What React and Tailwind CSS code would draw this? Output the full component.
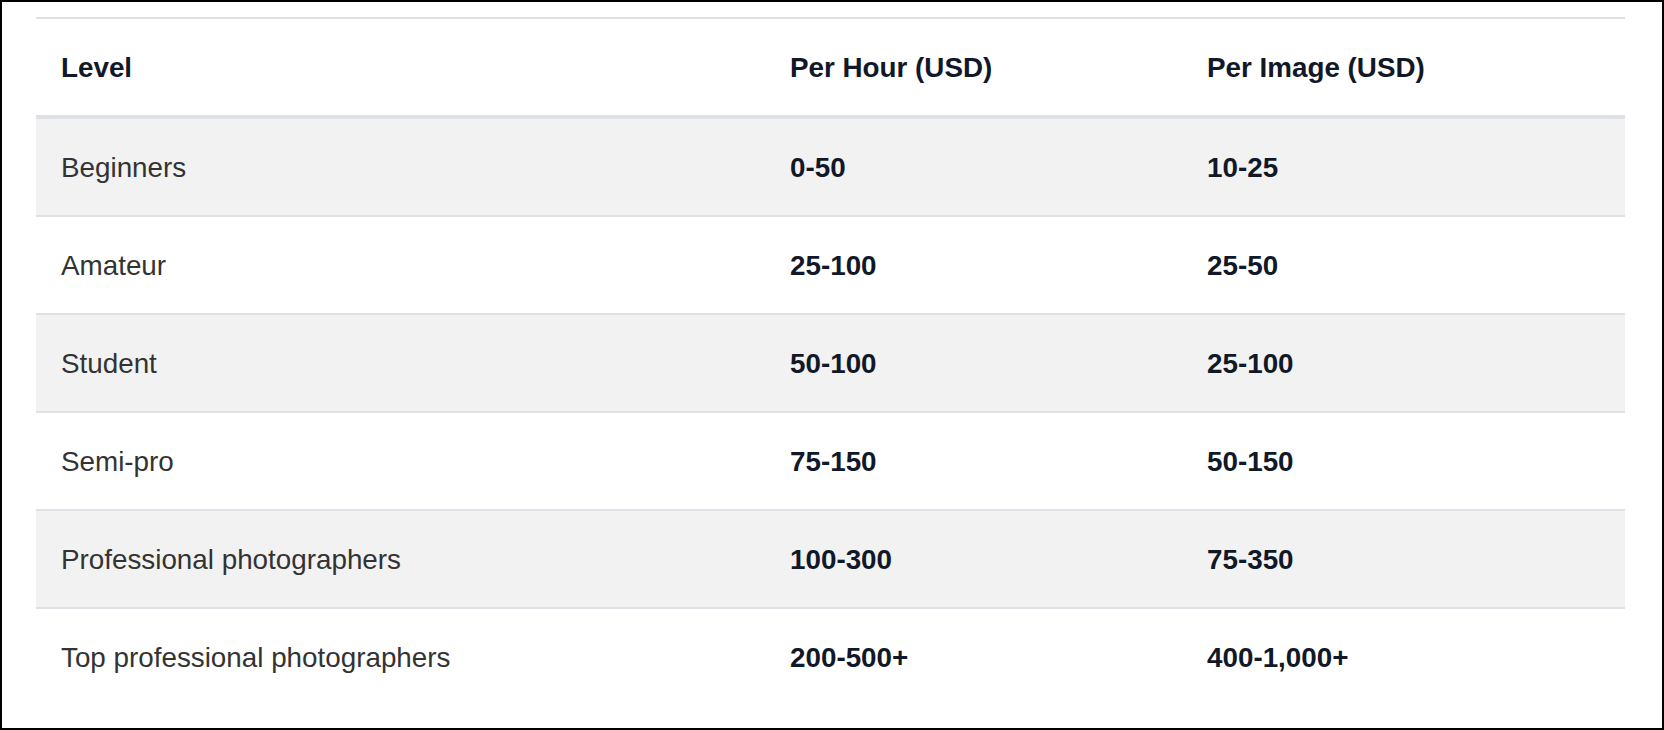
import React from "react";

const rows = [
  ["Beginners", "0-50", "10-25"],
  ["Amateur", "25-100", "25-50"],
  ["Student", "50-100", "25-100"],
  ["Semi-pro", "75-150", "50-150"],
  ["Professional photographers", "100-300", "75-350"],
  ["Top professional photographers", "200-500+", "400-1,000+"],
];

export default function App() {
  return (
    <div
      className="w-[1664px] h-[730px] border-2 border-black bg-white pl-[34px] pt-[15px] overflow-hidden"
      style={{ fontFamily: '"Liberation Sans", Arial, Helvetica, sans-serif' }}
    >
      <div className="w-[1589px] text-[27.8px]">
        <div className="grid grid-cols-[729px_417px_443px] h-[102px] pt-[2px] border-t-2 border-b-4 border-t-[#dde1e6] border-b-[#dde1e6] items-center font-bold text-[#111827]">
          <div className="pl-[25px]">Level</div>
          <div className="pl-[25px]">Per Hour (USD)</div>
          <div className="pl-[25px]">Per Image (USD)</div>
        </div>
        {rows.map((r, i) => (
          <div
            key={r[0]}
            className={
              "grid grid-cols-[729px_417px_443px] items-center pt-[2px] " +
              (i === rows.length - 1 ? "h-[96px] " : "h-[98px] border-b-2 border-[#dee2e6] ") +
              (i % 2 === 0 ? "bg-[#f2f2f2]" : "bg-white")
            }
          >
            <div className="pl-[25px] text-[#333333]">{r[0]}</div>
            <div className="pl-[25px] font-bold text-[#111827]">{r[1]}</div>
            <div className="pl-[25px] font-bold text-[#111827]">{r[2]}</div>
          </div>
        ))}
      </div>
    </div>
  );
}
